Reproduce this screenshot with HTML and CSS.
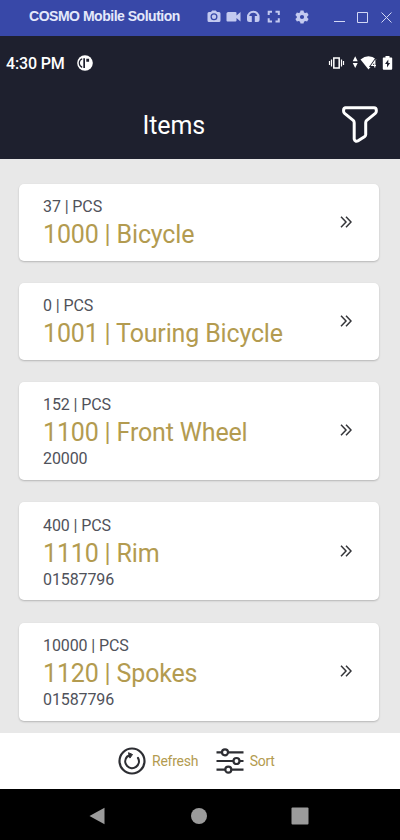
FILE: index.html
```html
<!DOCTYPE html>
<html lang="en">
<head>
<meta charset="utf-8">
<title>COSMO Mobile Solution</title>
<link rel="stylesheet" href="styles.css">
</head>
<body>
<div class="window">
  <div class="titlebar">
    <span class="titlebar-name">COSMO Mobile Solution</span>
    <svg class="titlebar-icons" width="200" height="36" viewBox="200 0 200 36">
      <g fill="#c3caf0">
        <path fill-rule="evenodd" d="M209 12h2l1.200-1.500h3.600L217 12h2q1.500 0 1.500 1.500v7q0 1.500-1.500 1.500h-10q-1.500 0-1.500-1.500v-7q0-1.500 1.500-1.500zM214 13.300a3.500 3.500 0 1 0 0 7a3.500 3.500 0 1 0 0-7z"/>
        <circle cx="214" cy="16.800" r="2.200"/>
        <path d="M227.500 12h8q1 0 1 1v2.500l4-3.500v9.500l-4-3.500v2.500q0 1-1 1h-8q-1 0-1-1v-7q0-1 1-1z"/>
        <path d="M247 17a6.300 6.300 0 0 1 12.600 0v2.500q0 2.500-2.500 2.500h-2.300v-6h2.600a4.200 4.200 0 0 0-8.200 0h2.600v6h-2.300q-2.500 0-2.500-2.500z"/>
        <path fill-rule="evenodd" d="M300.500 10.500h3l.5 1.900 1.200.7 1.900-.6 1.500 2.600-1.400 1.300v1.300l1.400 1.300-1.500 2.600-1.900-.6-1.200.7-.5 1.900h-3l-.5-1.900-1.200-.7-1.900.6-1.500-2.600 1.400-1.300v-1.300l-1.400-1.300 1.500-2.600 1.900.6 1.200-.7zM302 14.900a2.100 2.100 0 1 0 0 4.200a2.100 2.100 0 1 0 0-4.200z"/>
      </g>
      <path d="M268.700 15v-3.300h3.300M275.500 11.700h3.300V15M278.800 18.300v3.300h-3.300M272 21.600h-3.300v-3.300" fill="none" stroke="#c3caf0" stroke-width="2"/>
      <path d="M334 21.500h11M357.500 12.500h10v10h-10zM381.500 12.500l10 10M391.500 12.500l-10 10" fill="none" stroke="#d3d8f5" stroke-width="1"/>
    </svg>
  </div>

  <div class="statusbar">
    <span class="clock">4:30 PM</span>
    <svg class="app-badge" width="16" height="16" viewBox="0 0 16 16">
      <circle cx="8" cy="8" r="7.800" fill="#fff"/>
      <path d="M5.200 3.700Q2.300 5 2.300 8q0 3 2.900 4.400" fill="none" stroke="#1e202e" stroke-width="1.200"/>
      <path d="M6.300 3.300h1.700v9.800H6.300zM9.300 3.700h2.800v3.100H9.300z" fill="#1e202e"/>
    </svg>
    <svg class="status-icons" width="72" height="20" viewBox="328 53 72 20">
      <path d="M333.800 58h5.400v10h-5.400z" fill="none" stroke="#fff" stroke-width="1.500"/>
      <path d="M331.500 59.500v7M329.500 61v4M341.500 59.500v7M343.500 61v4" stroke="#fff" stroke-width="1.200"/>
      <path d="M352.700 61.200l2.500-5 2.500 5zM352.700 63l2.500 5 2.500-5z" fill="#fff"/>
      <path d="M360.500 59.500q8-6.500 16 0L368.500 69.500z" fill="#fff"/>
      <path d="M374.800 67.500v-6.300l-3 4.300h4.200" fill="none" stroke="#1e202e" stroke-width="3"/>
      <path d="M374.800 67.500v-6.300l-3 4.300h4.200" fill="none" stroke="#fff" stroke-width="1.200"/>
      <path d="M383.500 57.500h2V56h4v1.500h2q.7 0 .7.700v10.600q0 .9-.9.900h-7.600q-.9 0-.9-.9V58.200q0-.7.700-.7z" fill="#fff"/>
      <path d="M388.300 59.500l-3.300 4.600h2v3.400l3.100-4.600h-1.800z" fill="#1e202e"/>
    </svg>
  </div>

  <header class="header">
    <h1 class="header-title">Items</h1>
    <svg class="filter" width="40" height="40" viewBox="340 104 40 40">
      <path d="M345 107.700h29q2.300 0 2.300 2.300v1.300q0 1.300-1 2.100l-8.600 7q-1 .9-1 2.300v12.100q0 1-.9 1.600l-6.300 4.200q-3.700 1.600-4.300-1.600V122.700q0-1.400-1-2.300l-8.600-7q-1-.8-1-2.100V110q0-2.300 2.300-2.300z" fill="none" stroke="#fff" stroke-width="3" stroke-linejoin="round"/>
    </svg>
  </header>

  <main class="list">
    <article class="card">
      <div class="card-text">
        <div class="meta">37 | PCS</div>
        <div class="name">1000 | Bicycle</div>
      </div>
      <svg class="chevrons" width="12" height="12" viewBox="0 0 12 12"><path d="M1 .8L6 6 1 11.200M6 .8L11 6 6 11.200"/></svg>
    </article>
    <article class="card">
      <div class="card-text">
        <div class="meta">0 | PCS</div>
        <div class="name">1001 | Touring Bicycle</div>
      </div>
      <svg class="chevrons" width="12" height="12" viewBox="0 0 12 12"><path d="M1 .8L6 6 1 11.200M6 .8L11 6 6 11.200"/></svg>
    </article>
    <article class="card card-tall">
      <div class="card-text">
        <div class="meta">152 | PCS</div>
        <div class="name">1100 | Front Wheel</div>
        <div class="code">20000</div>
      </div>
      <svg class="chevrons" width="12" height="12" viewBox="0 0 12 12"><path d="M1 .8L6 6 1 11.200M6 .8L11 6 6 11.200"/></svg>
    </article>
    <article class="card card-tall">
      <div class="card-text">
        <div class="meta">400 | PCS</div>
        <div class="name">1110 | Rim</div>
        <div class="code">01587796</div>
      </div>
      <svg class="chevrons" width="12" height="12" viewBox="0 0 12 12"><path d="M1 .8L6 6 1 11.200M6 .8L11 6 6 11.200"/></svg>
    </article>
    <article class="card card-tall">
      <div class="card-text">
        <div class="meta">10000 | PCS</div>
        <div class="name">1120 | Spokes</div>
        <div class="code">01587796</div>
      </div>
      <svg class="chevrons" width="12" height="12" viewBox="0 0 12 12"><path d="M1 .8L6 6 1 11.200M6 .8L11 6 6 11.200"/></svg>
    </article>
  </main>

  <footer class="toolbar">
    <div class="action">
      <svg width="28" height="28" viewBox="0 0 28 28" fill="none" stroke="#2d2e33">
        <circle cx="14" cy="14" r="12.500" stroke-width="2.200"/>
        <path d="M20 11A6.800 6.800 0 1 1 9 9.800L12 8" stroke-width="2.200" stroke-linecap="round" stroke-linejoin="round"/>
        <path d="M10.500 5.700l4 1.800-2.600 3.600z" fill="#2d2e33" stroke-width="1" stroke-linejoin="round"/>
      </svg>
      <span>Refresh</span>
    </div>
    <div class="action">
      <svg width="28" height="28" viewBox="0 0 28 28" stroke="#2d2e33" stroke-width="2.200" fill="#fff">
        <path d="M.5 5.300h27M.5 14h27M.5 22.700h27"/>
        <circle cx="9" cy="5.300" r="3"/><circle cx="20.500" cy="14" r="3"/><circle cx="12.300" cy="22.700" r="3"/>
      </svg>
      <span>Sort</span>
    </div>
  </footer>

  <nav class="navbar">
    <svg width="18" height="18" viewBox="0 0 18 18"><path d="M1.500 9L16.500.8v16.400z"/></svg>
    <svg width="18" height="18" viewBox="0 0 18 18"><circle cx="9" cy="9" r="8"/></svg>
    <svg width="18" height="18" viewBox="0 0 18 18"><rect x=".5" y=".5" width="17" height="17" rx="1"/></svg>
  </nav>
</div>
</body>
</html>
```
FILE: styles.css
```css
* {
  box-sizing: border-box;
}

body {
  margin: 0;
  font-family: Roboto, sans-serif;
}

svg {
  display: block;
  flex: none;
}

.window {
  display: flex;
  flex-direction: column;
  width: 400px;
  height: 840px;
  overflow: hidden;
  background: #e8e8e8;
}

.titlebar {
  display: flex;
  justify-content: space-between;
  height: 36px;
  flex: none;
  padding-left: 29px;
  background: #3848a8;
}

.titlebar-name {
  color: #e4e8fb;
  font: bold 14px/32px "Liberation Sans", sans-serif;
  letter-spacing: -0.480px;
  white-space: nowrap;
}

.statusbar {
  display: flex;
  align-items: center;
  height: 54px;
  flex: none;
  padding-left: 6px;
  background: #1e202e;
}

.clock {
  width: 71px;
  color: #fff;
  font-size: 16px;
  font-weight: 500;
  letter-spacing: -0.150px;
  white-space: nowrap;
}

.status-icons {
  margin-left: auto;
}

.header {
  display: flex;
  align-items: center;
  justify-content: space-between;
  height: 69px;
  flex: none;
  padding: 0 20.500px 0 142.500px;
  background: #1e202e;
}

.filter {
  margin-top: -1px;
}

.header-title {
  margin: 0;
  padding-top: 2px;
  color: #fff;
  font-size: 25px;
  font-weight: 400;
  letter-spacing: -0.100px;
}

.list {
  display: flex;
  flex-direction: column;
  gap: 22.300px;
  height: 574px;
  flex: none;
  padding: 25px 21px 0 19px;
  overflow: hidden;
}

.card {
  display: flex;
  align-items: center;
  justify-content: space-between;
  height: 76.700px;
  flex: none;
  padding: 0 27px 0 24px;
  border-radius: 5px;
  background: #fff;
  box-shadow: 0 1px 2px rgba(0, 0, 0, 0.22);
}

.card-tall {
  height: 98px;
}

.card-text {
  padding-top: 2px;
  color: #50525a;
  font-size: 16px;
  letter-spacing: -0.100px;
  white-space: nowrap;
}

.meta {
  line-height: 22px;
}

.name {
  color: #b39b50;
  font-size: 25px;
  line-height: 33px;
  letter-spacing: -0.160px;
}

.code {
  line-height: 20px;
}

.chevrons {
  margin-top: -1px;
  fill: none;
  stroke: #35363a;
  stroke-width: 1.5;
}

.toolbar {
  display: flex;
  align-items: center;
  gap: 17.500px;
  height: 56px;
  flex: none;
  padding-left: 118px;
  background: #fff;
}

.action {
  display: flex;
  align-items: center;
  gap: 6px;
  color: #b39b50;
  font-size: 14px;
  letter-spacing: -0.250px;
}

.navbar {
  display: flex;
  align-items: center;
  justify-content: space-between;
  height: 51px;
  flex: none;
  padding: 3px 91px 0 88px;
  background: #000;
  fill: #9b9b9b;
}
```
